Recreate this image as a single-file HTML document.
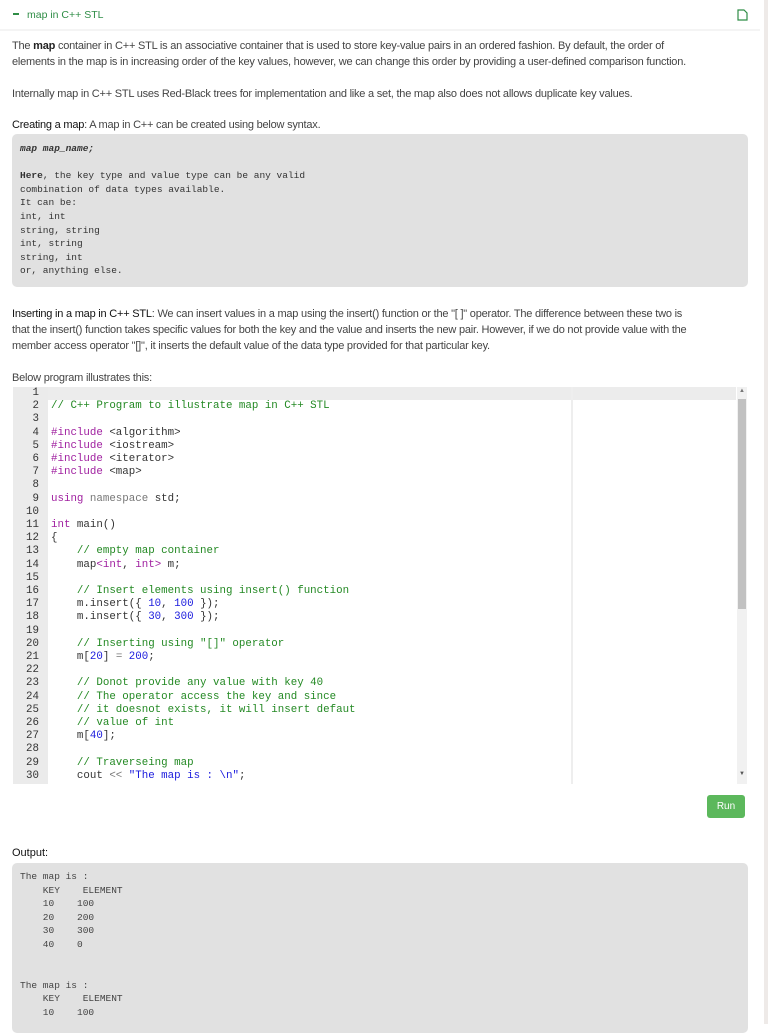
<!DOCTYPE html>
<html><head><meta charset="utf-8"><style>
*{margin:0;padding:0;box-sizing:border-box}
body{width:768px;height:1024px;overflow:hidden;background:#fff;font-family:"Liberation Sans",sans-serif;color:#333;position:relative}
.strip{position:absolute;left:764px;top:0;width:4px;height:1024px;background:#eeeae8}
.ab{position:absolute;white-space:nowrap}
.t{font-size:11px;letter-spacing:-0.22px;color:#444}
.t b{color:#222;font-weight:bold}
.hdr{left:13px;top:9px;font-size:10.5px;color:#2f8d46}
.hdr span{display:inline-block;width:6px;height:2px;background:#2f8d46;vertical-align:middle;margin-right:8px;position:relative;top:-1px}
.sep{position:absolute;left:0;top:29px;width:760px;height:2px;background:#f4f4f4}
.box{position:absolute;background:#e1e1e1;border-radius:5px}
.mono{font-family:"Liberation Mono",monospace;color:#333}
.pre{white-space:pre}
.ed{position:absolute;left:13px;top:387px;width:734px;height:397px;background:#fff}
.gut{position:absolute;left:0;top:0;width:35px;height:397px;background:#ebebeb}
.line1{position:absolute;left:0;top:0;width:723px;height:13px;background:#ececec}
.code{position:absolute;left:0;top:0;font-family:"Liberation Mono",monospace;font-size:10.8px;line-height:13.2px;white-space:pre}
.num{position:absolute;left:0;top:0;width:26px;text-align:right;font-family:"Liberation Mono",monospace;font-size:10.8px;line-height:13.2px;white-space:pre;color:#333}
.c{color:#238923}.k{color:#a020a0}.n{color:#1a1add}.s{color:#1a1add}.g{color:#777}
</style></head><body>
<div class="strip"></div>
<div class="ab hdr"><span></span>map in C++ STL</div>
<svg style="position:absolute;left:737px;top:9px" width="11" height="12" viewBox="0 0 11 12"><path d="M1 1h6l3 3v7H1z" fill="none" stroke="#2f8d46" stroke-width="1.2"/></svg>
<div class="sep"></div>

<div class="ab t" style="left:12px;top:40px">The <b>map</b> container in C++ STL is an associative container that is used to store key-value pairs in an ordered fashion. By default, the order of</div>
<div class="ab t" style="left:12px;top:56px">elements in the map is in increasing order of the key values, however, we can change this order by providing a user-defined comparison function.</div>
<div class="ab t" style="left:12px;top:88px">Internally map in C++ STL uses Red-Black trees for implementation and like a set, the map also does not allows duplicate key values.</div>
<div class="ab t" style="left:12px;top:119px"><b style="font-weight:normal;color:#111">Creating a map</b>: A map in C++ can be created using below syntax.</div>

<div class="box" style="left:12px;top:134px;width:736px;height:153px"></div>
<div class="ab mono pre" style="left:20px;top:142px;font-size:9.5px;line-height:13.6px"><b><i>map map_name;</i></b>

<b>Here</b>, the key type and value type can be any valid
combination of data types available.
It can be:
int, int
string, string
int, string
string, int
or, anything else.</div>

<div class="ab t" style="left:12px;top:308px"><b style="font-weight:normal;color:#111">Inserting in a map in C++ STL</b>: We can insert values in a map using the insert() function or the "[ ]" operator. The difference between these two is</div>
<div class="ab t" style="left:12px;top:324px">that the insert() function takes specific values for both the key and the value and inserts the new pair. However, if we do not provide value with the</div>
<div class="ab t" style="left:12px;top:340px">member access operator "[]", it inserts the default value of the data type provided for that particular key.</div>
<div class="ab t" style="left:12px;top:372px">Below program illustrates this:</div>

<div class="ed">
<div class="line1"></div>
<div class="gut"></div>
<div style="position:absolute;left:558px;top:0;width:2px;height:397px;background:#eee"></div>
<div style="position:absolute;left:724px;top:0;width:10px;height:397px;background:#f1f1f1"></div>
<div style="position:absolute;left:725px;top:12px;width:8px;height:210px;background:#c1c1c1"></div>
<div class="ab" style="left:726px;top:1px;font-size:6px;color:#777">▲</div>
<div class="ab" style="left:726px;top:384px;font-size:6px;color:#555">▼</div>
<div class="num"> 1
 2
 3
 4
 5
 6
 7
 8
 9
10
11
12
13
14
15
16
17
18
19
20
21
22
23
24
25
26
27
28
29
30</div>
<div class="code" style="left:38px">
<span class="c">// C++ Program to illustrate map in C++ STL</span>

<span class="k">#include</span> &lt;algorithm&gt;
<span class="k">#include</span> &lt;iostream&gt;
<span class="k">#include</span> &lt;iterator&gt;
<span class="k">#include</span> &lt;map&gt;

<span class="k">using</span> <span class="g">namespace</span> std;

<span class="k">int</span> main()
{
    <span class="c">// empty map container</span>
    map<span class="k">&lt;int</span>, <span class="k">int&gt;</span> m;

    <span class="c">// Insert elements using insert() function</span>
    m.insert({ <span class="n">10</span>, <span class="n">100</span> });
    m.insert({ <span class="n">30</span>, <span class="n">300</span> });

    <span class="c">// Inserting using "[]" operator</span>
    m[<span class="n">20</span>] <span class="g">=</span> <span class="n">200</span>;

    <span class="c">// Donot provide any value with key 40</span>
    <span class="c">// The operator access the key and since</span>
    <span class="c">// it doesnot exists, it will insert defaut</span>
    <span class="c">// value of int</span>
    m[<span class="n">40</span>];

    <span class="c">// Traverseing map</span>
    cout <span class="g">&lt;&lt;</span> <span class="s">"The map is : \n"</span>;</div>
</div>

<div style="position:absolute;left:707px;top:795px;width:38px;height:23px;background:#5cb85c;border-radius:3px;color:#fff;font-size:10px;text-align:center;line-height:23px">Run</div>

<div class="ab" style="left:12px;top:847px;font-size:11px;color:#111">Output:</div>
<div class="box" style="left:12px;top:863px;width:736px;height:170px"></div>
<div class="ab mono pre" style="left:20px;top:870px;font-size:9.5px;line-height:13.6px;color:#444">The map is :
    KEY    ELEMENT
    10    100
    20    200
    30    300
    40    0


The map is :
    KEY    ELEMENT
    10    100</div>
</body></html>
